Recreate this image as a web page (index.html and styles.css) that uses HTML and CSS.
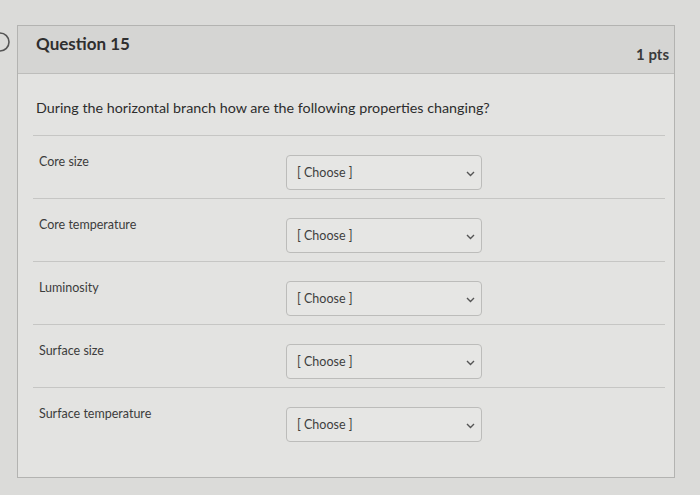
FILE: index.html
```html
<!DOCTYPE html>
<html>
<head>
<meta charset="utf-8">
<link rel="stylesheet" href="styles.css">
</head>
<body>
<div class="page">
  <svg class="marker" width="14" height="22" viewBox="0 0 14 22"><circle cx="0" cy="11" r="9" fill="none" stroke="#555" stroke-width="1.6"/></svg>
  <div class="card">
    <div class="header">
      <div class="title">Question 15</div>
      <div class="pts">1 pts</div>
    </div>
    <div class="body">
      <p class="question">During the horizontal branch how are the following properties changing?</p>
      <div class="answers">
        <div class="row"><div class="label">Core size</div><div class="select"><span>[ Choose ]</span><svg class="chev" width="9" height="6" viewBox="0 0 9 6"><path d="M1 1l3.5 3.5L8 1" fill="none" stroke="#555" stroke-width="1.4"/></svg></div></div>
        <div class="row"><div class="label">Core temperature</div><div class="select"><span>[ Choose ]</span><svg class="chev" width="9" height="6" viewBox="0 0 9 6"><path d="M1 1l3.5 3.5L8 1" fill="none" stroke="#555" stroke-width="1.4"/></svg></div></div>
        <div class="row"><div class="label">Luminosity</div><div class="select"><span>[ Choose ]</span><svg class="chev" width="9" height="6" viewBox="0 0 9 6"><path d="M1 1l3.5 3.5L8 1" fill="none" stroke="#555" stroke-width="1.4"/></svg></div></div>
        <div class="row"><div class="label">Surface size</div><div class="select"><span>[ Choose ]</span><svg class="chev" width="9" height="6" viewBox="0 0 9 6"><path d="M1 1l3.5 3.5L8 1" fill="none" stroke="#555" stroke-width="1.4"/></svg></div></div>
        <div class="row"><div class="label">Surface temperature</div><div class="select"><span>[ Choose ]</span><svg class="chev" width="9" height="6" viewBox="0 0 9 6"><path d="M1 1l3.5 3.5L8 1" fill="none" stroke="#555" stroke-width="1.4"/></svg></div></div>
      </div>
    </div>
  </div>
</div>
</body>
</html>
```
FILE: styles.css
```css
html, body {
  margin: 0;
  padding: 0;
  background: #dbdbd9;
  font-family: Lato, "Liberation Sans", sans-serif;
  color: #333;
}
.page {
  display: flex;
  align-items: flex-start;
  padding-top: 25px;
  height: 470px;
}
.marker {
  margin-top: 6px;
  margin-right: 3px;
  flex: none;
}
.card {
  width: 656px;
  border: 1px solid #b3b3b1;
  background: #e3e3e1;
}
.header {
  height: 47px;
  background: #d5d5d3;
  border-bottom: 1px solid #bdbdbb;
  display: flex;
  justify-content: space-between;
  align-items: flex-start;
  padding: 0 5px 0 18px;
}
.title {
  font-size: 17px;
  font-weight: bold;
  color: #2f2f2f;
  padding-top: 8px;
  line-height: 20px;
}
.pts {
  font-size: 15px;
  font-weight: bold;
  color: #3a3a3a;
  padding-top: 19px;
  line-height: 18px;
}
.body {
  padding: 24px 9px 27px 15px;
}
.question {
  margin: 0 0 17px 3px;
  font-size: 14.3px;
  line-height: 20px;
  color: #2d2d2d;
}
.answers {
  display: flex;
  flex-direction: column;
}
.row {
  display: flex;
  align-items: flex-start;
  border-top: 1px solid #c6c6c4;
  padding: 19px 0 8px;
}
.label {
  width: 247px;
  padding-left: 6px;
  font-size: 12.5px;
  line-height: 14px;
  color: #3c3c3c;
}
.select {
  box-sizing: border-box;
  width: 196px;
  height: 35px;
  border: 1px solid #bcbcba;
  border-radius: 4px;
  background: #e6e6e4;
  display: flex;
  align-items: center;
  justify-content: space-between;
  padding: 0 6px 0 10px;
  font-size: 12.5px;
  color: #3e3e3e;
}
.chev {
  margin-top: 3px;
}
```
